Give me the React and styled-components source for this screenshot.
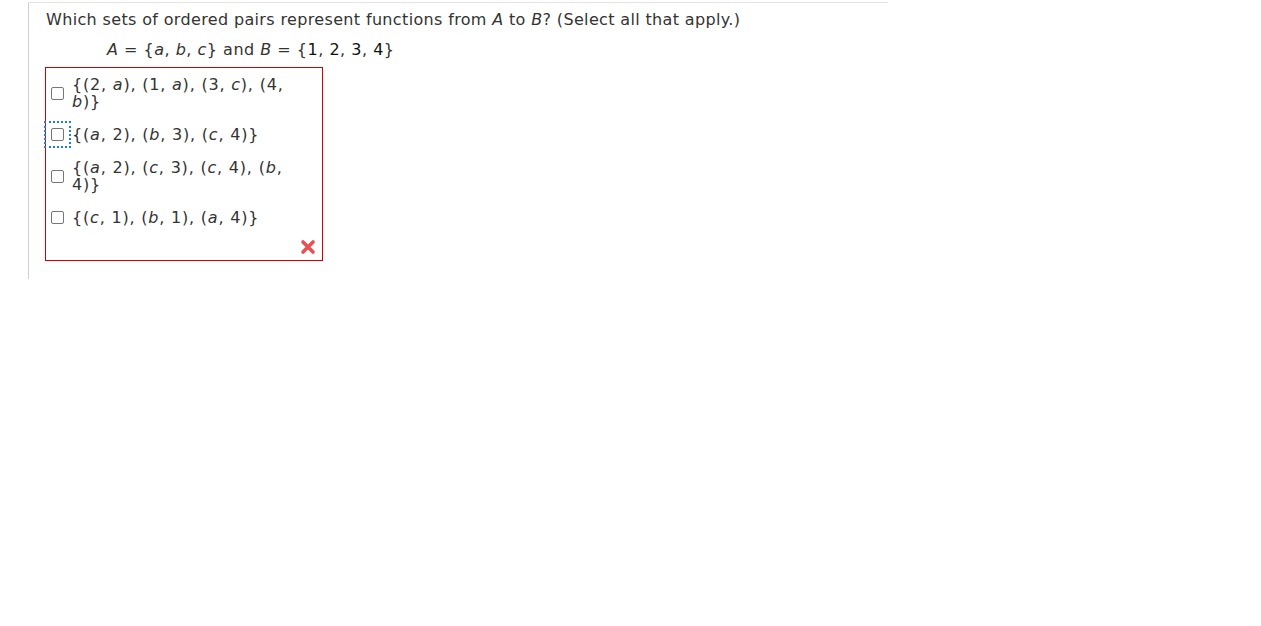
import React from "react";
import styled, { createGlobalStyle } from "styled-components";

const Global = createGlobalStyle`
  html, body { margin: 0; padding: 0; background: #fff; }
  body { font-family: "DejaVu Sans", Verdana, sans-serif; color: #333; }
`;

const Frame = styled.div`
  margin: 2px 0 0 28px;
  width: 860px;
  border-top: 1px solid #e3e3e3;
`;

const Column = styled.div`
  border-left: 1px solid #cfcfcf;
  height: 276px;
  padding: 7px 0 0 17px;
  box-sizing: border-box;
`;

const Question = styled.div`
  font-size: 16px;
  letter-spacing: 0.35px;
  line-height: 19px;
  color: #333;
`;

const MathLine = styled.div`
  font-size: 16px;
  letter-spacing: 0.5px;
  line-height: 19px;
  margin: 11px 0 0 61px;
  color: #333;
`;

const Var = styled.i`
  font-style: italic;
`;

const Num = styled.span`
  color: #111;
`;

const AnswerBox = styled.div`
  margin: 8px 0 0 -1px;
  width: 278px;
  box-sizing: border-box;
  border: 1px solid #d40000;
  padding: 8px 6px 5px 0;
  display: flex;
  flex-direction: column;
  gap: 12px;
`;

const Row = styled.label`
  display: flex;
  align-items: center;
  min-height: 25px;
`;

const BoxWrap = styled.span`
  width: 23px;
  height: 23px;
  flex: none;
  display: flex;
  align-items: center;
  outline: ${(p) => (p.$focus ? "2px dotted #1a7fe0" : "none")};
  outline-offset: 0px;
`;

const Check = styled.span`
  width: 11px;
  height: 11px;
  border: 1px solid #767676;
  border-radius: 2px;
  background: #fff;
  margin-left: 5px;
`;

const Option = styled.span`
  font-size: 16px;
  letter-spacing: 0.8px;
  line-height: 17px;
  width: 218px;
  margin-left: 3px;
  color: #333;
`;

const Footer = styled.div`
  display: flex;
  justify-content: flex-end;
  margin-top: -3px;
`;

const Cross = () => (
  <svg width="16" height="16" viewBox="0 0 16 16">
    <path d="M3 3 L13 13 M13 3 L3 13" stroke="#ea5052" strokeWidth="3.6" strokeLinecap="round" />
  </svg>
);

const opts = [
  [["{(2, "], ["a", 1], ["), (1, "], ["a", 1], ["), (3, "], ["c", 1], ["), (4, "], ["b", 1], [")}"]],
  [["{("], ["a", 1], [", 2), ("], ["b", 1], [", 3), ("], ["c", 1], [", 4)}"]],
  [["{("], ["a", 1], [", 2), ("], ["c", 1], [", 3), ("], ["c", 1], [", 4), ("], ["b", 1], [", 4)}"]],
  [["{("], ["c", 1], [", 1), ("], ["b", 1], [", 1), ("], ["a", 1], [", 4)}"]],
];

export default function App() {
  return (
    <>
      <Global />
      <Frame>
        <Column>
          <Question>
            Which sets of ordered pairs represent functions from <Var>A</Var> to <Var>B</Var>? (Select all that apply.)
          </Question>
          <MathLine>
            <Var>A</Var> = {"{"}<Var>a</Var>, <Var>b</Var>, <Var>c</Var>{"}"} and <Var>B</Var> = {"{"}<Num>1</Num>, <Num>2</Num>, <Num>3</Num>, <Num>4</Num>{"}"}
          </MathLine>
          <AnswerBox>
            {opts.map((parts, i) => (
              <Row key={i}>
                <BoxWrap $focus={i === 1}>
                  <Check />
                </BoxWrap>
                <Option>
                  {parts.map(([t, it], j) => (it ? <Var key={j}>{t}</Var> : <span key={j}>{t}</span>))}
                </Option>
              </Row>
            ))}
            <Footer>
              <Cross />
            </Footer>
          </AnswerBox>
        </Column>
      </Frame>
    </>
  );
}
